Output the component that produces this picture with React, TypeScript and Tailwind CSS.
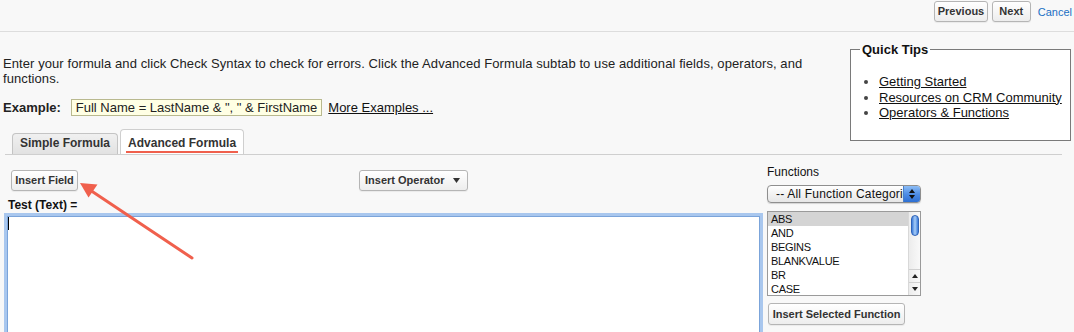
import clsx from "clsx";
import type { ReactNode } from "react";

const functionNames = ["ABS", "AND", "BEGINS", "BLANKVALUE", "BR", "CASE"];
const quickTips = ["Getting Started", "Resources on CRM Community", "Operators & Functions"];

const Btn = ({ children, className }: { children: ReactNode; className?: string }) => (
  <button
    className={clsx(
      "h-[21px] whitespace-nowrap rounded-[3px] border border-[#b5b5b5] bg-linear-to-b from-white to-[#ededed] px-[3px] text-[11px] font-bold leading-none text-[#333] shadow-[0_1px_1px_rgba(0,0,0,0.06)]",
      className
    )}
  >
    {children}
  </button>
);

const FunctionsPanel = () => (
  <div className="flex flex-col pt-[10px] pl-[4px]">
    <p className="text-[12px] leading-[14px] text-[#111]">Functions</p>

    <div className="mt-[6px] flex h-[18px] w-[154px] overflow-hidden rounded-[4px] border border-[#8f8f8f] bg-linear-to-b from-white to-[#e6e6e6] shadow-[0_1px_1px_rgba(0,0,0,0.15)]">
      <span className="flex-1 overflow-hidden whitespace-nowrap pl-[8px] text-[12px] leading-[16px] tracking-[0.2px] text-[#111]">
        -- All Function Categories --
      </span>
      <span className="flex w-[17px] flex-col items-center justify-center gap-[2px] border-l border-[#4a7fc9] bg-linear-to-b from-[#8dbdf5] via-[#4f8ee6] to-[#2d6fd3]">
        <svg width="6" height="4" viewBox="0 0 6 4">
          <path d="M0 4 L3 0 L6 4 Z" fill="#111" />
        </svg>
        <svg width="6" height="4" viewBox="0 0 6 4">
          <path d="M0 0 L3 4 L6 0 Z" fill="#111" />
        </svg>
      </span>
    </div>

    <div className="mt-[8px] flex h-[85px] w-[154px] border border-[#9a9a9a] bg-white">
      <ul className="flex-1 text-[11px] leading-[14px] tracking-[-0.3px] text-[#111]">
        {functionNames.map((name, i) => (
          <li key={name} className={clsx("pl-[3px]", i === 0 && "bg-[#d4d4d4]")}>
            {name}
          </li>
        ))}
      </ul>
      <div className="flex w-[12px] flex-col border-l border-[#d8d8d8] bg-linear-to-r from-[#ececec] to-[#f9f9f9]">
        <div className="mx-auto mt-[3px] h-[21px] w-[8px] rounded-full border border-[#2f63b8] bg-linear-to-r from-[#3b7ad9] via-[#a7cdf7] to-[#3b7ad9]" />
        <div className="flex-1" />
        <div className="flex h-[13px] items-center justify-center border-t border-[#d0d0d0]">
          <svg width="6" height="4" viewBox="0 0 6 4">
            <path d="M0 4 L3 0 L6 4 Z" fill="#222" />
          </svg>
        </div>
        <div className="flex h-[13px] items-center justify-center border-t border-[#d0d0d0]">
          <svg width="6" height="4" viewBox="0 0 6 4">
            <path d="M0 0 L3 4 L6 0 Z" fill="#222" />
          </svg>
        </div>
      </div>
    </div>

    <Btn className="mt-[7px] ml-[1px] h-[22px] w-[137px]">Insert Selected Function</Btn>
  </div>
);

export default function App() {
  return (
    <div className="relative h-[332px] w-[1074px] overflow-hidden bg-[#f8f8f8] font-['Liberation_Sans',Arial,sans-serif] text-[13px] text-[#222]">
      {/* wizard buttons */}
      <div className="flex h-[31px] items-start justify-end gap-[4px] pt-[1px] pr-[2px]">
        <Btn className="w-[54px]">Previous</Btn>
        <Btn className="w-[39px]">Next</Btn>
        <a className="ml-[3px] mt-[3px] text-[11px] text-[#1a6fc4]">Cancel</a>
      </div>
      <div className="border-t border-[#dddddd]" />

      {/* intro + quick tips */}
      <div className="grid grid-cols-[848px_1fr]">
        <div className="pl-[3px] pt-[24px]">
          <p className="w-[820px] leading-[15px] tracking-[0.08px]">
            Enter your formula and click Check Syntax to check for errors. Click the Advanced Formula subtab to use
            additional fields, operators, and functions.
          </p>
          <div className="mt-[13px] flex h-[17px] items-center">
            <span className="font-bold">Example:</span>
            <span className="ml-[10px] border border-[#b9b98f] bg-[#ffffe4] px-[4px] leading-[15px]">
              Full Name = LastName &amp; ", " &amp; FirstName
            </span>
            <a className="ml-[6px] text-[#111] underline">More Examples ...</a>
          </div>
        </div>

        <fieldset className="row-span-2 mt-[10px] mr-[3px] ml-[2px] h-[99px] self-start border border-[#7a7a7a] bg-white">
          <legend className="ml-[9px] px-[2px] font-bold leading-[15px] text-[#111]">Quick Tips</legend>
          <ul className="mt-[17px] list-disc pl-[28px] leading-[15.5px] marker:text-[#444]">
            {quickTips.map((tip) => (
              <li key={tip}>
                <a className="text-[#111] underline">{tip}</a>
              </li>
            ))}
          </ul>
        </fieldset>

        <div className="mt-[13px] flex items-end gap-[2px] pl-[12px]">
          <div className="h-[21px] rounded-t-[4px] border-x border-t border-[#c4c4c4] bg-linear-to-b from-[#f0f0f0] to-[#e2e2e2] px-[7px] pt-[2px] text-[12px] font-bold leading-[14px] text-[#333]">
            Simple Formula
          </div>
          <div className="h-[25px] rounded-t-[4px] border-x border-t border-[#cfcfcf] bg-white px-[5px] pt-[6px] text-[12px] font-bold leading-[14px] text-[#333]">
            <span className="inline-block border-b-[2px] border-[#f0604d] px-[2px] pb-[1px]">Advanced Formula</span>
          </div>
        </div>
      </div>
      <div className="ml-[5px] w-[1057px] border-t border-[#cfcfcf]" />

      {/* formula editor */}
      <div className="grid grid-cols-[763px_1fr]">
        <div className="flex flex-col">
          <div className="mt-[15px] flex">
            <Btn className="ml-[11px] w-[67px]">Insert Field</Btn>
            <Btn className="ml-[281px] flex w-[109px] items-center gap-[9px] pl-[5px]">
              Insert Operator
              <svg width="7" height="5" viewBox="0 0 7 5">
                <path d="M0 0 L3.5 5 L7 0 Z" fill="#333" />
              </svg>
            </Btn>
          </div>
          <p className="mt-[7px] pl-[8px] text-[12px] font-bold leading-[14px] text-[#111]">Test (Text) =</p>
          <div className="mt-[1px] ml-[4px] h-[130px] w-[759px] border-[3px] border-[#a9c7ee] bg-white shadow-[inset_0_0_0_1px_#7ba4da]">
            <div className="ml-[1px] mt-[1px] h-[13px] w-px bg-black" />
          </div>
        </div>
        <FunctionsPanel />
      </div>

      {/* annotation arrow */}
      <svg className="pointer-events-none absolute inset-0" width="1074" height="332" viewBox="0 0 1074 332">
        <line x1="192" y1="258" x2="90" y2="190" stroke="#f0604d" strokeWidth="3" strokeLinecap="round" />
        <path d="M80 183 L97.5 184.5 L88.5 197.5 Z" fill="#f0604d" />
      </svg>
    </div>
  );
}
